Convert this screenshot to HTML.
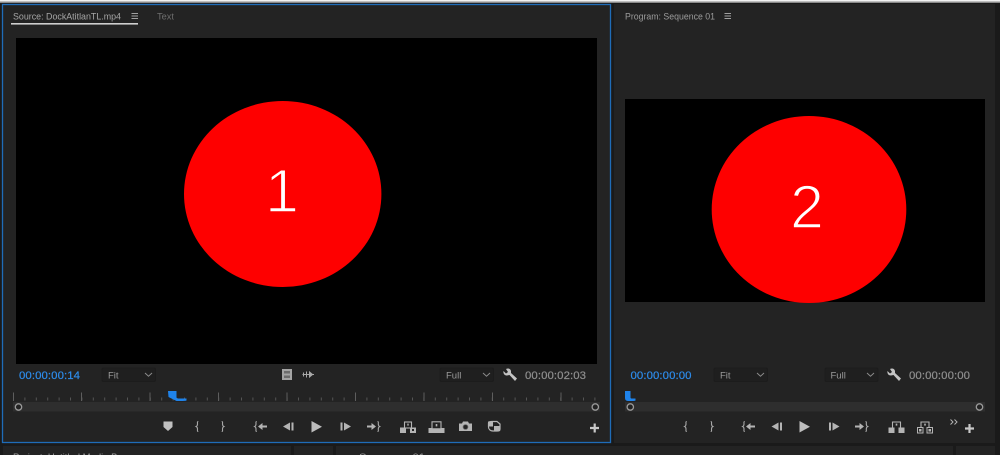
<!DOCTYPE html>
<html>
<head>
<meta charset="utf-8">
<style>
html,body{margin:0;padding:0;background:#1a1a1a;width:1000px;height:455px;overflow:hidden}
svg{display:block;filter:blur(.3px)}
text{font-family:"Liberation Sans",sans-serif}
</style>
</head>
<body>
<svg width="1000" height="455" viewBox="0 0 1000 455" xmlns="http://www.w3.org/2000/svg">
<defs>
<g id="lb"><path d="M1.8 0.5C0.6 0.5 1 1.5 1 3C1 4.5 0.8 5 -0.4 5.5C0.8 6 1 6.5 1 8C1 9.5 0.6 10.5 1.8 10.5" fill="none" stroke="#a8a8a8" stroke-width="1.1"/></g>
<g id="rb"><path d="M-0.8 0.5C0.4 0.5 0 1.5 0 3C0 4.5 0.2 5 1.4 5.5C0.2 6 0 6.5 0 8C0 9.5 0.4 10.5 -0.8 10.5" fill="none" stroke="#a8a8a8" stroke-width="1.1"/></g>
<g id="gotoin" fill="#b4b4b4"><path d="M1.8 0.5C0.6 0.5 1 1.5 1 3C1 4.5 0.8 5 -0.4 5.5C0.8 6 1 6.5 1 8C1 9.5 0.6 10.5 1.8 10.5" fill="none" stroke="#a8a8a8" stroke-width="1.1"/><path d="M3 5.5L7.5 2V4.5H12V6.5H7.5V9Z"/></g>
<g id="gotoout" fill="#b4b4b4"><path d="M0 4.5H4.5V2L9 5.5L4.5 9V6.5H0Z"/><path d="M10.5 0.5C11.7 0.5 11.3 1.5 11.3 3C11.3 4.5 11.5 5 12.7 5.5C11.5 6 11.3 6.5 11.3 8C11.3 9.5 11.7 10.5 10.5 10.5" fill="none" stroke="#a8a8a8" stroke-width="1.1"/></g>
<g id="stepb" fill="#b4b4b4"><path d="M7 1.5V9.5L0 5.5Z"/><rect x="8.5" y="1.5" width="2" height="8"/></g>
<g id="stepf" fill="#b4b4b4"><rect x="0" y="1.5" width="2" height="8"/><path d="M3.5 1.5V9.5L10.5 5.5Z"/></g>
<path id="play" d="M0 0V11.5L10.5 5.75Z" fill="#bdbdbd"/>
<g id="insert"><path d="M0 6.5H6V12H0Z" fill="#b4b4b4"/><path d="M10 6.5H16V12H10Z" fill="#b4b4b4"/><rect x="4.5" y="1" width="7" height="6" fill="#232323" stroke="#b4b4b4" stroke-width="1.1"/><rect x="7.3" y="2.6" width="1.4" height="2" fill="#b4b4b4"/><rect x="12" y="8" width="2" height="2" fill="#232323"/></g>
<g id="overwrite"><rect x="0" y="7" width="16" height="5" fill="#b4b4b4"/><rect x="3.5" y="0.8" width="9" height="7" fill="#232323" stroke="#b4b4b4" stroke-width="1.1"/><rect x="7.2" y="3" width="1.6" height="2.4" fill="#b4b4b4"/></g>
<g id="progA"><path d="M0 6.5H6V12H0Z" fill="#b4b4b4"/><path d="M10 6.5H16V12H10Z" fill="#b4b4b4"/><path d="M4 6.5V1H12V6.5" fill="none" stroke="#b4b4b4" stroke-width="1.1"/><rect x="7.2" y="2.6" width="1.6" height="2" fill="#b4b4b4"/></g>
<g id="progB"><rect x="0.5" y="6.5" width="5.5" height="5.5" fill="none" stroke="#b4b4b4"/><rect x="10" y="6.5" width="5.5" height="5.5" fill="none" stroke="#b4b4b4"/><rect x="2" y="8" width="2.5" height="2.5" fill="#b4b4b4"/><rect x="11.5" y="8" width="2.5" height="2.5" fill="#b4b4b4"/><path d="M4 6.5V1H12V6.5" fill="none" stroke="#b4b4b4" stroke-width="1.1"/><rect x="7.2" y="2.6" width="1.6" height="2" fill="#b4b4b4"/></g>
<path id="wrench" d="M0.5 3L3 5.5L5 4L3 1C5 0 7.5 .5 8 3L8 5L14 10.5L12 13L6.5 7L4 7.5C1.5 7.5 0 5.5 0.5 3Z" fill="#c4c4c4"/>
<g id="chev"><path d="M0 0L3.5 3.2L7 0" fill="none" stroke="#8c8c8c" stroke-width="1"/></g>
</defs>

<!-- page frame -->
<rect width="1000" height="455" fill="#1a1a1a"/>
<rect width="1000" height="1.5" fill="#f2f2f2"/>
<rect y="1.5" width="1000" height="1.5" fill="#8a8a8a"/>

<!-- panels -->
<rect x="2.5" y="4.5" width="608" height="438" fill="#232323" stroke="#1f6cb8" stroke-width="1.3"/>
<rect x="614" y="4" width="381" height="439" fill="#232323"/>
<rect x="3" y="446" width="288" height="9" fill="#232323"/>
<rect x="294" y="446" width="39" height="9" fill="#232323"/>
<rect x="336" y="446" width="617" height="9" fill="#232323"/>
<rect x="956" y="446" width="39" height="9" fill="#232323"/>

<!-- source header -->
<text x="13" y="19.5" font-size="9.6" fill="#a6a6a6" textLength="108" lengthAdjust="spacingAndGlyphs">Source: DockAtitlanTL.mp4</text>
<path d="M131.5 13.5H138M131.5 16H138M131.5 18.5H138" stroke="#a0a0a0" stroke-width="1"/>
<rect x="11" y="23" width="127" height="1.6" fill="#cfcfcf"/>
<text x="157" y="19.5" font-size="9.6" fill="#6e6e6e" textLength="17" lengthAdjust="spacingAndGlyphs">Text</text>

<!-- source video -->
<rect x="16" y="38" width="581" height="326" fill="#000"/>
<ellipse cx="282.7" cy="194" rx="98.7" ry="93" fill="#fe0000"/>
<text x="282" y="212" font-size="61" fill="#fff" stroke="#fe0000" stroke-width="1.6" text-anchor="middle">1</text>

<!-- source controls -->
<text x="19" y="379" font-size="11.4" fill="#2d8ceb" stroke="#2d8ceb" stroke-width=".2" textLength="61" lengthAdjust="spacing">00:00:00:14</text>
<rect x="102" y="368" width="53.5" height="13.5" rx="1.5" fill="#1f1f1f" stroke="#1c1c1c"/>
<text x="108" y="378.5" font-size="9.5" fill="#9a9a9a">Fit</text>
<use href="#chev" x="145" y="373"/>
<rect x="282" y="369" width="10" height="11" fill="#a4a4a4"/>
<rect x="284" y="371" width="6" height="2.5" fill="#6d6d6d"/>
<rect x="284" y="375.5" width="6" height="2.5" fill="#6d6d6d"/>
<path d="M302.5 374.5H314" stroke="#a8a8a8" stroke-width="1"/>
<path d="M303.5 372.5V376.5M306.5 371.5V377.5M309.5 372V377L312.5 374.5Z" stroke="#a8a8a8" stroke-width="1" fill="#a8a8a8"/>
<rect x="440" y="368" width="53.5" height="13.5" rx="1.5" fill="#1f1f1f" stroke="#1c1c1c"/>
<text x="446" y="378.5" font-size="9.5" fill="#9a9a9a">Full</text>
<use href="#chev" x="483" y="373"/>
<use href="#wrench" x="503" y="368"/>
<text x="525" y="379" font-size="11.4" fill="#8f8f8f" stroke="#8f8f8f" stroke-width=".2" textLength="61" lengthAdjust="spacing">00:00:02:03</text>

<!-- source ruler -->
<line x1="13" y1="399" x2="597" y2="399" stroke="#555" stroke-width="3" stroke-dasharray="1 10.4"/>
<path d="M13.5 392.5V401M81.5 392.5V401M150 392.5V401M218.5 392.5V401M287 392.5V401M355.5 392.5V401M424 392.5V401M492.5 392.5V401M561 392.5V401" stroke="#5e5e5e" stroke-width="1"/>
<rect x="13" y="402" width="587" height="9.5" fill="#2e2e2e"/>
<circle cx="18.5" cy="407" r="3.2" fill="#232323" stroke="#9a9a9a" stroke-width="1.3"/>
<circle cx="595.3" cy="407" r="3.2" fill="#232323" stroke="#9a9a9a" stroke-width="1.3"/>
<path d="M168 391H176.5V397.5Q177 398.5 179 398.5H186.5V400.5Q186 401 180 401H176.5L172 398.8L168.5 397Z" fill="#1f83ea"/>

<!-- source transport -->
<path d="M163.5 421.5H172.5V427L168 431L163.5 427Z" fill="#c0c0c0"/>
<use href="#lb" x="196.5" y="421"/>
<use href="#rb" x="222.5" y="421"/>
<use href="#gotoin" x="255" y="421"/>
<use href="#stepb" x="283" y="421"/>
<use href="#play" x="311.5" y="421"/>
<use href="#stepf" x="340.5" y="421"/>
<use href="#gotoout" x="367" y="421"/>
<use href="#insert" x="400" y="421"/>
<use href="#overwrite" x="428.5" y="421"/>
<path d="M459 423.5H462L463 421.5H468L469 423.5H472V431H459Z" fill="#b4b4b4"/>
<circle cx="465.5" cy="427" r="2.4" fill="#232323" stroke="#6a6a6a" stroke-width=".8"/>
<path d="M488.5 423C489 421.5 490 421.5 492 421.5H497L500 424V429C500 431 499 431 497 431H493C490 431 488.5 429 488.5 427Z" fill="#1f1f1f" stroke="#b4b4b4" stroke-width="1.2"/>
<rect x="488" y="421.5" width="5" height="5" fill="#b4b4b4"/>
<rect x="494" y="426" width="6" height="5" fill="#b4b4b4"/>
<path d="M590 428H599M594.7 423.5V432.5" stroke="#c8c8c8" stroke-width="2.2"/>

<!-- program -->
<text x="625" y="19.5" font-size="9.6" fill="#9c9c9c" textLength="90" lengthAdjust="spacingAndGlyphs">Program: Sequence 01</text>
<path d="M724.5 13.5H731M724.5 16H731M724.5 18.5H731" stroke="#a0a0a0" stroke-width="1"/>
<rect x="625" y="99" width="360" height="203" fill="#000"/>
<ellipse cx="809" cy="209.5" rx="97.3" ry="93.5" fill="#fe0000"/>
<text x="807" y="228" font-size="61" fill="#fff" stroke="#fe0000" stroke-width="1.6" text-anchor="middle">2</text>

<text x="630.5" y="379" font-size="11.4" fill="#2d8ceb" stroke="#2d8ceb" stroke-width=".2" textLength="61" lengthAdjust="spacing">00:00:00:00</text>
<rect x="714" y="368" width="53.5" height="13.5" rx="1.5" fill="#1f1f1f" stroke="#1c1c1c"/>
<text x="720" y="378.5" font-size="9.5" fill="#9a9a9a">Fit</text>
<use href="#chev" x="757" y="373"/>
<rect x="825" y="368" width="53" height="13.5" rx="1.5" fill="#1f1f1f" stroke="#1c1c1c"/>
<text x="830.5" y="378.5" font-size="9.5" fill="#9a9a9a">Full</text>
<use href="#chev" x="867" y="373"/>
<use href="#wrench" x="887" y="368"/>
<text x="909" y="379" font-size="11.4" fill="#8f8f8f" stroke="#8f8f8f" stroke-width=".2" textLength="61" lengthAdjust="spacing">00:00:00:00</text>

<rect x="625" y="402" width="360" height="9.5" fill="#2e2e2e"/>
<path d="M625 391H630.5V397.5Q630.5 398.5 632 398.5H635.5V400.5Q635 401 632 401H628.5Q625 401 625 398Z" fill="#1f83ea"/>
<circle cx="630.3" cy="407" r="3.2" fill="#232323" stroke="#9a9a9a" stroke-width="1.3"/>
<circle cx="979.5" cy="407" r="3.2" fill="#232323" stroke="#9a9a9a" stroke-width="1.3"/>

<use href="#lb" x="685" y="421"/>
<use href="#rb" x="711.5" y="421"/>
<use href="#gotoin" x="743" y="421"/>
<use href="#stepb" x="771.5" y="421"/>
<use href="#play" x="799.5" y="421"/>
<use href="#stepf" x="829" y="421"/>
<use href="#gotoout" x="855" y="421"/>
<use href="#progA" x="888.5" y="421"/>
<use href="#progB" x="917" y="421"/>
<path d="M950.5 419.5L953 422L950.5 424.5M954.5 419.5L957 422L954.5 424.5" fill="none" stroke="#b4b4b4" stroke-width="1"/>
<path d="M965 428.5H974M969.5 424V433" stroke="#c8c8c8" stroke-width="2.2"/>

<!-- bottom partial labels -->
<text x="13" y="460" font-size="9.6" fill="#9c9c9c" textLength="133" lengthAdjust="spacingAndGlyphs">Project: Untitled      Media Browser</text>
<text x="359" y="460" font-size="9.6" fill="#9c9c9c" textLength="66" lengthAdjust="spacingAndGlyphs">Sequence 01</text>
</svg>
</body>
</html>
